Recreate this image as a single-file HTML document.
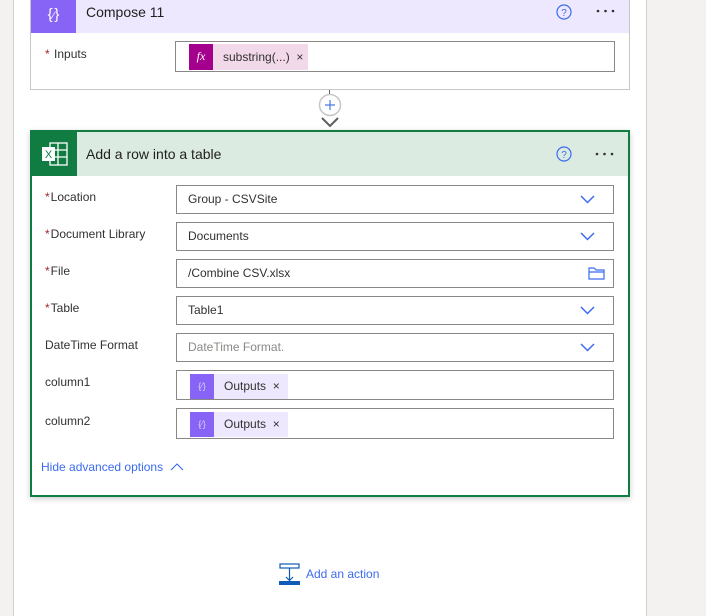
<!DOCTYPE html>
<html><head><style>
*{box-sizing:border-box;margin:0;padding:0}
body{width:706px;height:616px;background:#f3f2f1;font-family:"Liberation Sans",sans-serif;position:relative;overflow:hidden;font-size:12px;color:#323130}
.panel{position:absolute;left:13px;top:0;width:634px;height:616px;background:#fff;border-left:1px solid #d0d0d0;border-right:1px solid #d0d0d0}
.card{position:absolute;left:30px;width:600px;background:#fff}
.lbl{position:absolute;left:45px;font-size:12px;color:#323130}
.lbl b{color:#a4262c;font-weight:normal;margin-right:1px}
.inp{position:absolute;left:176px;width:438px;height:29px;border:1px solid #8a8886;background:#fff;font-size:12px;padding-left:11px;line-height:27px}
.chev{position:absolute;right:18px;top:9px}
.tok{position:absolute;left:13px;top:3px;height:25px;background:#ede8fd;padding-left:48px;padding-right:8px;line-height:25px;font-size:12px}
.tok i{position:absolute;left:0;top:0;width:24px;height:25px;background:#8764f6;color:#d9cffc;font-style:normal;font-size:9px;text-align:center}
.tok span{margin-left:-14px}
.dots{position:absolute}
</style></head><body>
<div class="panel"></div>
<!-- Compose card -->
<div class="card" style="top:-14px;height:104px;border:1px solid #c8c6c4">
 <div style="position:absolute;left:0;top:0;width:598px;height:46px;background:#ede8fd"></div>
 <div style="position:absolute;left:0;top:0;width:45px;height:46px;background:#8764f6;color:#fff;text-align:center;line-height:56px;font-size:15px">{<span style="font-size:11px">⁄</span>}</div>
 <div style="position:absolute;left:55px;top:17px;font-size:14px;color:#201f1e">Compose 11</div>
 <svg style="position:absolute;left:525px;top:17px" width="16" height="16"><circle cx="8" cy="8" r="7" fill="none" stroke="#3b6bf0" stroke-width="1.2"/><text x="8" y="12" font-size="10" text-anchor="middle" fill="#3b6bf0" font-family="Liberation Sans">?</text></svg>
 <svg class="dots" style="left:565px;top:22px" width="20" height="4"><circle cx="2" cy="2" r="1.3" fill="#323130"/><circle cx="9.5" cy="2" r="1.3" fill="#323130"/><circle cx="17" cy="2" r="1.3" fill="#323130"/></svg>
</div>
<div class="lbl" style="top:47px"><b>*</b> Inputs</div>
<div class="inp" style="top:41px;left:175px;width:440px;height:31px;padding:0">
 <div style="position:absolute;left:13px;top:2px;height:26px;width:119px;background:#f2d9ea"></div>
 <div style="position:absolute;left:13px;top:2px;height:26px;width:24px;background:#a4008d;color:#fff;font-family:'Liberation Serif';font-style:italic;text-align:center;line-height:25px;font-size:12px">fx</div>
 <div style="position:absolute;left:47px;top:1px;line-height:28px;font-size:12px">substring(...)&nbsp; ×</div>
</div>
<!-- connector -->
<div style="position:absolute;left:329px;top:90px;width:1px;height:6px;background:#605e5c"></div>
<svg style="position:absolute;left:318px;top:93px" width="24" height="40"><circle cx="12" cy="12" r="10.5" fill="#fff" stroke="#c8c6c4" stroke-width="1.5"/><path d="M12 7v10M7 12h10" stroke="#4a79e8" stroke-width="1.2"/><path d="M4 25l8 8 8-8" fill="none" stroke="#605e5c" stroke-width="2"/></svg>
<!-- Excel card -->
<div class="card" style="top:130px;height:367px;border:2px solid #107c41;box-shadow:0 2px 6px rgba(0,0,0,.2)">
 <div style="position:absolute;left:0;top:0;width:596px;height:44px;background:#dcebe1"></div>
 <div style="position:absolute;left:0;top:0;width:45px;height:44px;background:#107c41"></div>
 <svg style="position:absolute;left:9px;top:10px" width="28" height="25"><rect x="9" y="1" width="17" height="22" fill="none" stroke="#fff" stroke-width="1.3"/><path d="M9 8h17M9 15h17M17 1v22" stroke="#fff" stroke-width="1.3"/><rect x="1" y="5" width="13" height="14" fill="#fff"/><text x="7.5" y="16" font-size="11" fill="#107c41" text-anchor="middle" font-family="Liberation Sans">X</text></svg>
 <div style="position:absolute;left:54px;top:14px;font-size:14px;color:#201f1e">Add a row into a table</div>
 <svg style="position:absolute;left:524px;top:14px" width="16" height="16"><circle cx="8" cy="8" r="7" fill="none" stroke="#3b6bf0" stroke-width="1.2"/><text x="8" y="12" font-size="10" text-anchor="middle" fill="#3b6bf0" font-family="Liberation Sans">?</text></svg>
 <svg class="dots" style="left:563px;top:20px" width="20" height="4"><circle cx="2" cy="2" r="1.3" fill="#323130"/><circle cx="9.5" cy="2" r="1.3" fill="#323130"/><circle cx="17" cy="2" r="1.3" fill="#323130"/></svg>
</div>
<div class="lbl" style="top:190px"><b>*</b>Location</div>
<div class="inp" style="top:185px">Group - CSVSite<svg class="chev" width="15" height="9"><path d="M1 1l6.5 6.5L14 1" fill="none" stroke="#3b6bf0" stroke-width="1.5"/></svg></div>
<div class="lbl" style="top:227px"><b>*</b>Document Library</div>
<div class="inp" style="top:222px">Documents<svg class="chev" width="15" height="9"><path d="M1 1l6.5 6.5L14 1" fill="none" stroke="#3b6bf0" stroke-width="1.5"/></svg></div>
<div class="lbl" style="top:264px"><b>*</b>File</div>
<div class="inp" style="top:259px">/Combine CSV.xlsx<svg style="position:absolute;right:8px;top:7px" width="17" height="13"><path d="M1 1h5l2 2h8v9H1z M1 5h15" fill="none" stroke="#3b6bf0" stroke-width="1.2"/></svg></div>
<div class="lbl" style="top:301px"><b>*</b>Table</div>
<div class="inp" style="top:296px">Table1<svg class="chev" width="15" height="9"><path d="M1 1l6.5 6.5L14 1" fill="none" stroke="#3b6bf0" stroke-width="1.5"/></svg></div>
<div class="lbl" style="top:338px">DateTime Format</div>
<div class="inp" style="top:333px;color:#8a8886">DateTime Format.<svg class="chev" width="15" height="9"><path d="M1 1l6.5 6.5L14 1" fill="none" stroke="#3b6bf0" stroke-width="1.5"/></svg></div>
<div class="lbl" style="top:375px">column1</div>
<div class="inp" style="top:370px;height:30px;padding:0"><div class="tok"><i>{⁄}</i><span>Outputs&nbsp; ×</span></div></div>
<div class="lbl" style="top:414px">column2</div>
<div class="inp" style="top:408px;height:31px;padding:0"><div class="tok"><i>{⁄}</i><span>Outputs&nbsp; ×</span></div></div>
<div style="position:absolute;left:41px;top:460px;color:#3b6bf0;font-size:12px">Hide advanced options <svg width="14" height="9" style="margin-left:4px"><path d="M1 8l6-6 6 6" fill="none" stroke="#3b6bf0" stroke-width="1.1"/></svg></div>
<!-- Add an action -->
<svg style="position:absolute;left:279px;top:563px" width="22" height="22"><rect x="1" y="1" width="19" height="4" fill="none" stroke="#0f5bb5" stroke-width="1.2"/><path d="M10.5 5v12M7 14l3.5 3.5L14 14" fill="none" stroke="#0f5bb5" stroke-width="1.2"/><rect x="0" y="18" width="21" height="4" fill="#0f5bb5"/></svg>
<div style="position:absolute;left:306px;top:567px;color:#3b6bf0;font-size:12px">Add an action</div>
</body></html>
